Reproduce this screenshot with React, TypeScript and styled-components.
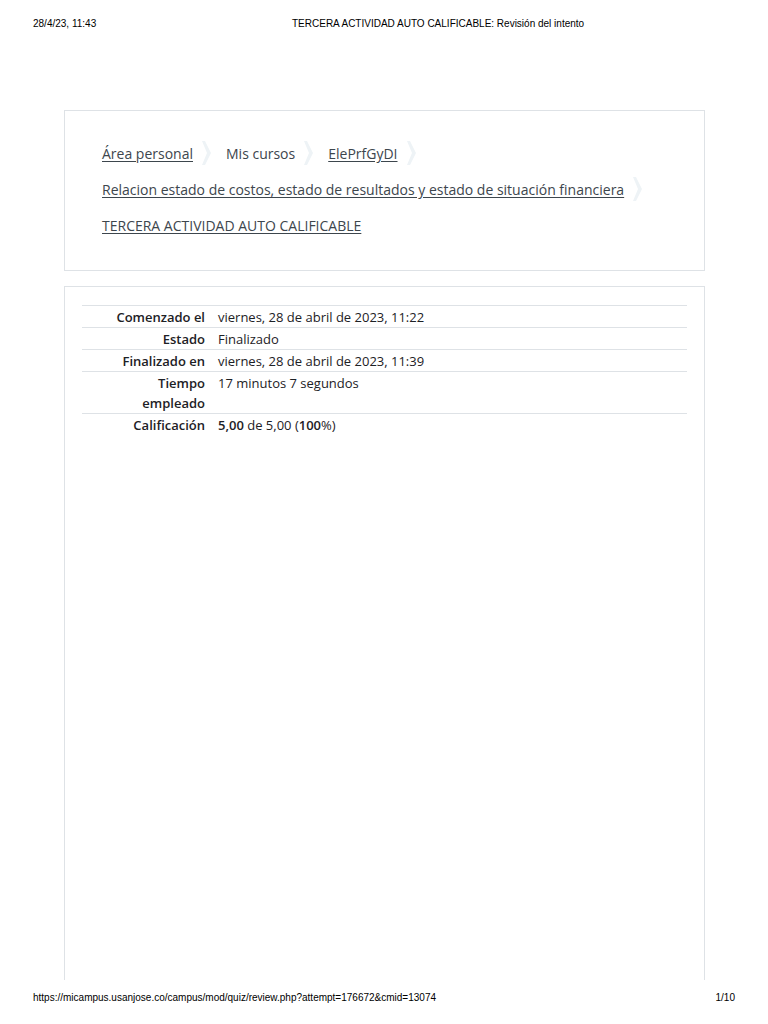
import styled, { createGlobalStyle } from "styled-components";

const GlobalStyle = createGlobalStyle`
  html, body {
    margin: 0;
    padding: 0;
    background: #fff;
  }
  body {
    font-family: "Open Sans", "Noto Sans", sans-serif;
    color: #1d2125;
  }
`;

const crumbs = [
  { text: "Área personal", link: true },
  { text: "Mis cursos", link: false },
  { text: "ElePrfGyDI", link: true },
  { text: "Relacion estado de costos, estado de resultados y estado de situación financiera", link: true },
  { text: "TERCERA ACTIVIDAD AUTO CALIFICABLE", link: true, last: true },
];

const rows = [
  { label: "Comenzado el", value: "viernes, 28 de abril de 2023, 11:22" },
  { label: "Estado", value: "Finalizado" },
  { label: "Finalizado en", value: "viernes, 28 de abril de 2023, 11:39" },
  { label: "Tiempo empleado", value: "17 minutos 7 segundos" },
];

const Chevron = () => (
  <ChevronSvg width="9" height="24" viewBox="0 0 9 24">
    <path d="M0 0 L3 0 L9 12 L3 24 L0 24 L5 12 Z" fill="#eef3f6" />
  </ChevronSvg>
);

const App = () => {
  return (
    <>
      <GlobalStyle />
      <Page>
        <PrintHeader>
          <span>28/4/23, 11:43</span>
          <HeaderTitle>TERCERA ACTIVIDAD AUTO CALIFICABLE: Revisión del intento</HeaderTitle>
        </PrintHeader>

        <Main>
          <Card>
            <Breadcrumb>
              {crumbs.map((c) => (
                <Crumb key={c.text}>
                  {c.link ? <CrumbLink>{c.text}</CrumbLink> : <CrumbText>{c.text}</CrumbText>}
                  {!c.last && <Chevron />}
                </Crumb>
              ))}
            </Breadcrumb>
          </Card>

          <SummaryCard>
            <Table>
              <colgroup>
                <col style={{ width: 128 }} />
                <col />
              </colgroup>
              <tbody>
                {rows.map((r) => (
                  <Tr key={r.label}>
                    <Th>{r.label}</Th>
                    <Td>{r.value}</Td>
                  </Tr>
                ))}
                <Tr>
                  <Th>Calificación</Th>
                  <Td>
                    <b>5,00</b> de 5,00 (<b>100</b>%)
                  </Td>
                </Tr>
              </tbody>
            </Table>
          </SummaryCard>
        </Main>

        <PrintFooter>
          <span>https://micampus.usanjose.co/campus/mod/quiz/review.php?attempt=176672&amp;cmid=13074</span>
          <span>1/10</span>
        </PrintFooter>
      </Page>
    </>
  );
};

const Page = styled.div`
  width: 768px;
  height: 1024px;
  display: flex;
  flex-direction: column;
  overflow: hidden;
`;

const PrintHeader = styled.div`
  display: grid;
  grid-template-columns: 259px auto;
  padding: 18px 33px 0;
  height: 110px;
  box-sizing: border-box;
  font-family: "Liberation Sans", Arial, sans-serif;
  font-size: 10px;
  color: #000;
`;

const HeaderTitle = styled.span`
  white-space: nowrap;
`;

const Main = styled.div`
  flex: 1;
  display: flex;
  flex-direction: column;
  gap: 15px;
  padding: 0 63px 0 64px;
  min-height: 0;
`;

const Card = styled.div`
  border: 1px solid #dee2e6;
  padding: 30px 37px 33px;
`;

const Breadcrumb = styled.div`
  display: flex;
  flex-wrap: wrap;
  row-gap: 12px;
`;

const Crumb = styled.div`
  display: flex;
  align-items: center;
  height: 24px;
  font-size: 14px;
`;

const CrumbLink = styled.a`
  color: #3d464d;
  text-decoration: underline;
  text-underline-offset: 2px;
  cursor: pointer;
`;

const CrumbText = styled.span`
  color: #3d464d;
`;

const ChevronSvg = styled.svg`
  margin: 0 15px 0 9px;
  flex: none;
`;

const SummaryCard = styled.div`
  flex: 1;
  border: 1px solid #dee2e6;
  border-bottom: none;
  padding: 18px 17px 0;
`;

const Table = styled.table`
  width: 100%;
  table-layout: fixed;
  border-collapse: collapse;
  font-size: 13px;
`;

const Tr = styled.tr`
  border-top: 1px solid #dee2e6;
`;

const Th = styled.th`
  text-align: right;
  font-weight: 600;
  padding: 1px 5px 0 22px;
  line-height: 20px;
  vertical-align: top;
`;

const Td = styled.td`
  padding: 1px 0 0 8px;
  line-height: 20px;
  vertical-align: top;

  b {
    font-weight: 600;
  }
`;

const PrintFooter = styled.div`
  display: flex;
  justify-content: space-between;
  height: 44px;
  padding: 12px 33px 0;
  box-sizing: border-box;
  font-family: "Liberation Sans", Arial, sans-serif;
  font-size: 10px;
  color: #000;
`;

export default App;
